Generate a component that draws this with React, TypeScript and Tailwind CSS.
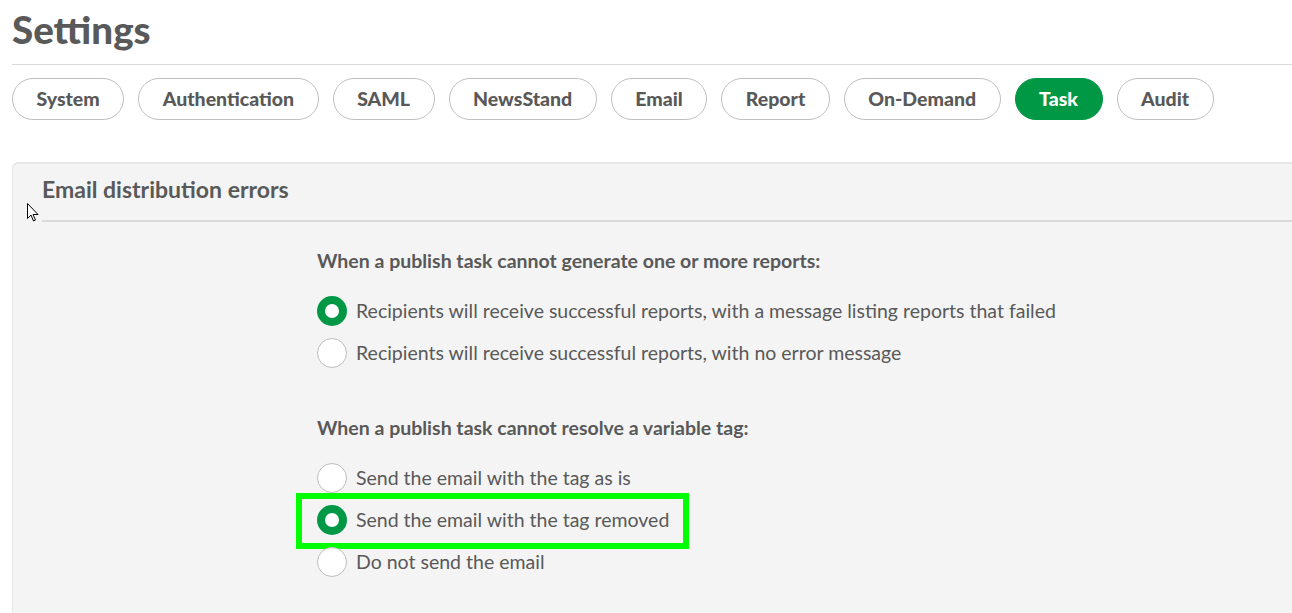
import React, { useState } from 'react';

const tabs = ['System', 'Authentication', 'SAML', 'NewsStand', 'Email', 'Report', 'On-Demand', 'Task', 'Audit'];

interface Option {
  id: string;
  label: string;
}

const reportOptions: Option[] = [
  { id: 'list', label: 'Recipients will receive successful reports, with a message listing reports that failed' },
  { id: 'none', label: 'Recipients will receive successful reports, with no error message' }
];

const tagOptions: Option[] = [
  { id: 'asis', label: 'Send the email with the tag as is' },
  { id: 'removed', label: 'Send the email with the tag removed' },
  { id: 'skip', label: 'Do not send the email' }
];

function Radio({ checked }: { checked: boolean }) {
  return checked ? (
    <span className="w-[30px] h-[30px] rounded-full bg-[#009845] flex items-center justify-center shrink-0">
      <span className="w-[14px] h-[14px] rounded-full bg-white" />
    </span>
  ) : (
    <span className="w-[30px] h-[30px] rounded-full bg-white border border-[#bdbdbd] shrink-0" />
  );
}

function RadioGroup({ title, options, value, onChange, highlight }: {
  title: string;
  options: Option[];
  value: string;
  onChange: (v: string) => void;
  highlight?: string;
}) {
  return (
    <div>
      <h3 className="text-[19.5px] font-bold text-[#595959] h-[24px] leading-[24px]">{title}</h3>
      <div className="mt-[23px] flex flex-col gap-[12px]">
        {options.map(opt => (
          <div key={opt.id} className="relative">
            {highlight === opt.id && (
              <div className="absolute left-[-21px] top-[-12px] w-[393px] h-[56px] border-[6px] border-[#00ff00]" />
            )}
            <label className="relative flex items-center gap-[9px] h-[30px] cursor-pointer" onClick={() => onChange(opt.id)}>
              <Radio checked={value === opt.id} />
              <span className="text-[19.5px] text-[#595959]">{opt.label}</span>
            </label>
          </div>
        ))}
      </div>
    </div>
  );
}

export default function App() {
  const [report, setReport] = useState('list');
  const [tag, setTag] = useState('removed');

  return (
    <div className="w-[1292px] h-[613px] overflow-hidden bg-white text-[#595959] relative" style={{ fontFamily: 'Lato, "Noto Sans", sans-serif' }}>
      <div className="pl-[12px]">
        <h1 className="text-[38.5px] font-black leading-[40px] pt-[9px] h-[64px]">Settings</h1>
        <div className="border-t border-[#d9d9d9]" />
        <div className="flex gap-[14px] mt-[13px]">
          {tabs.map(t => (
            <button
              key={t}
              className={
                t === 'Task'
                  ? 'h-[42px] px-[23.5px] rounded-full bg-[#009845] border border-[#009845] text-white text-[19.5px] font-black'
                  : 'h-[42px] px-[23.5px] rounded-full bg-white border border-[#bfbfbf] text-[#595959] text-[19.5px] font-black'
              }
            >
              {t}
            </button>
          ))}
        </div>

        <div className="mt-[42px] bg-[#f4f4f4] rounded-tl-[6px] border-t-2 border-l border-[#e6e6e6] h-[460px]">
          <div className="pl-[29px]">
            <h2 className="text-[23px] font-bold leading-[28px] pt-[11px] h-[56px]">Email distribution errors</h2>
            <div className="border-t-2 border-[#d9d9d9]" />
          </div>
          <div className="pl-[304px] pt-[27px] flex flex-col gap-[48px]">
            <RadioGroup
              title="When a publish task cannot generate one or more reports:"
              options={reportOptions}
              value={report}
              onChange={setReport}
            />
            <RadioGroup
              title="When a publish task cannot resolve a variable tag:"
              options={tagOptions}
              value={tag}
              onChange={setTag}
              highlight="removed"
            />
          </div>
        </div>
      </div>

      <svg className="absolute left-[27px] top-[203px]" width="12" height="19" viewBox="0 0 12 19">
        <path d="M0.5 0.5 L0.5 15.5 L4 12 L6.5 18 L8.5 17 L6 11.5 L11 11.5 Z" fill="white" stroke="black" strokeWidth="1" strokeLinejoin="round" />
      </svg>
    </div>
  );
}
